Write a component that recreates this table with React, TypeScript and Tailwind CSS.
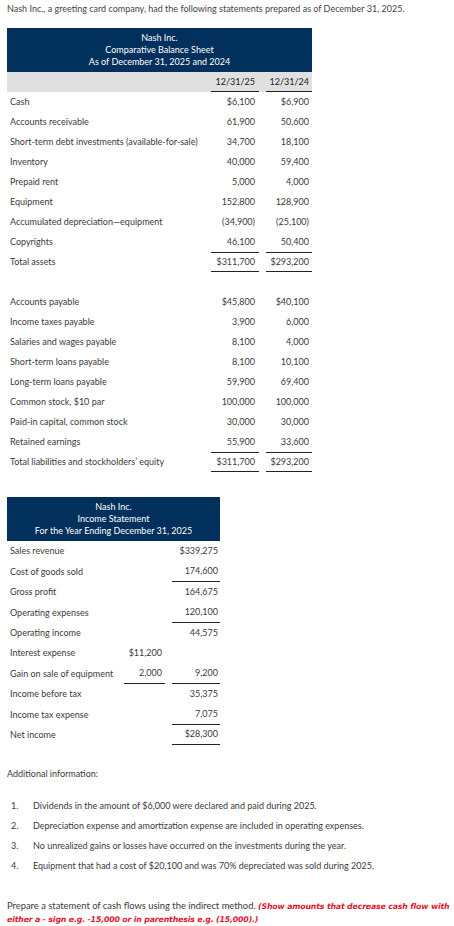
import React from "react";

type BsRow = { label: string; a: string; b: string; total?: boolean };

const assets: BsRow[] = [
  { label: "Cash", a: "$6,100", b: "$6,900" },
  { label: "Accounts receivable", a: "61,900", b: "50,600" },
  { label: "Short-term debt investments (available-for-sale)", a: "34,700", b: "18,100" },
  { label: "Inventory", a: "40,000", b: "59,400" },
  { label: "Prepaid rent", a: "5,000", b: "4,000" },
  { label: "Equipment", a: "152,800", b: "128,900" },
  { label: "Accumulated depreciation\u2014equipment", a: "(34,900)", b: "(25,100)" },
  { label: "Copyrights", a: "46,100", b: "50,400" },
  { label: "Total assets", a: "$311,700", b: "$293,200", total: true },
];

const liabilities: BsRow[] = [
  { label: "Accounts payable", a: "$45,800", b: "$40,100" },
  { label: "Income taxes payable", a: "3,900", b: "6,000" },
  { label: "Salaries and wages payable", a: "8,100", b: "4,000" },
  { label: "Short-term loans payable", a: "8,100", b: "10,100" },
  { label: "Long-term loans payable", a: "59,900", b: "69,400" },
  { label: "Common stock, $10 par", a: "100,000", b: "100,000" },
  { label: "Paid-in capital, common stock", a: "30,000", b: "30,000" },
  { label: "Retained earnings", a: "55,900", b: "33,600" },
  { label: "Total liabilities and stockholders\u2019 equity", a: "$311,700", b: "$293,200", total: true },
];

type IsRow = { label: string; mid?: string; right?: string; midLine?: boolean; rightLine?: boolean };

const income: IsRow[] = [
  { label: "Sales revenue", right: "$339,275" },
  { label: "Cost of goods sold", right: "174,600", rightLine: true },
  { label: "Gross profit", right: "164,675" },
  { label: "Operating expenses", right: "120,100", rightLine: true },
  { label: "Operating income", right: "44,575" },
  { label: "Interest expense", mid: "$11,200" },
  { label: "Gain on sale of equipment", mid: "2,000", right: "9,200", midLine: true, rightLine: true },
  { label: "Income before tax", right: "35,375" },
  { label: "Income tax expense", right: "7,075", rightLine: true },
  { label: "Net income", right: "$28,300", rightLine: true },
];

const notes = [
  "Dividends in the amount of $6,000 were declared and paid during 2025.",
  "Depreciation expense and amortization expense are included in operating expenses.",
  "No unrealized gains or losses have occurred on the investments during the year.",
  "Equipment that had a cost of $20,100 and was 70% depreciated was sold during 2025.",
];

function BsLine({ row }: { row: BsRow }) {
  return (
    <div className="flex h-5 items-center">
      <div className="flex-1 pl-[3px]">{row.label}</div>
      <div className={`flex h-full w-[48px] items-center justify-end pr-[4px] ${row.total ? "border-y border-[#222]" : ""}`}>
        {row.a}
      </div>
      <div className={`ml-[7px] flex h-full w-[46px] items-center justify-end pr-[3px] ${row.total ? "border-y border-[#222]" : ""}`}>
        {row.b}
      </div>
    </div>
  );
}

function Header({ lines }: { lines: string[] }) {
  return (
    <div className="flex h-[44px] flex-col items-center justify-center bg-[#00305b] text-[9px] leading-[12px] text-white">
      {lines.map((l) => (
        <div key={l}>{l}</div>
      ))}
    </div>
  );
}

export default function App() {
  return (
    <div className="min-h-[926px] w-[454px] bg-white font-[Lato,'Liberation_Sans',sans-serif] text-[9px] text-[#3a3a3a]">
      <p className="px-[7px] pt-[3px] leading-[12px] text-[#444]">
        Nash Inc., a greeting card company, had the following statements prepared as of December 31, 2025.
      </p>

      {/* Balance sheet */}
      <div className="ml-[7px] mt-[13px] w-[305px]">
        <Header lines={["Nash Inc.", "Comparative Balance Sheet", "As of December 31, 2025 and 2024"]} />
        <div className="flex h-5 bg-[#e0e0e0] text-[#222]">
          <div className="flex-1" />
          <div className="flex h-full w-[48px] items-center justify-end border-b border-[#222] pr-[4px]">12/31/25</div>
          <div className="ml-[7px] flex h-full w-[46px] items-center justify-end border-b border-[#222] pr-[3px]">12/31/24</div>
        </div>
        {assets.map((r) => (
          <BsLine key={r.label} row={r} />
        ))}
        <div className="h-5" />
        {liabilities.map((r) => (
          <BsLine key={r.label} row={r} />
        ))}
      </div>

      {/* Income statement */}
      <div className="ml-[7px] mt-[25px] w-[213px]">
        <Header lines={["Nash Inc.", "Income Statement", "For the Year Ending December 31, 2025"]} />
        {income.map((r) => (
          <div key={r.label} className="flex h-[20.4px] items-center">
            <div className="flex-1 pl-[3px]">{r.label}</div>
            <div className={`flex h-full w-[41px] items-center justify-end pr-[3px] ${r.midLine ? "border-b border-[#222]" : ""}`}>
              {r.mid}
            </div>
            <div className={`ml-[7px] flex h-full w-[48px] items-center justify-end pr-[2px] ${r.rightLine ? "border-b border-[#222]" : ""}`}>
              {r.right}
            </div>
          </div>
        ))}
      </div>

      {/* Additional information */}
      <p className="mt-[23px] px-[7px] leading-[12px]">Additional information:</p>
      <ol className="mt-[16px]">
        {notes.map((n, i) => (
          <li key={i} className="flex h-5 items-center">
            <span className="w-[33px] pl-[11px]">{i + 1}.</span>
            <span>{n}</span>
          </li>
        ))}
      </ol>

      <p className="mt-[24px] pl-[7px] text-[9.4px] leading-[12px]">
        Prepare a statement of cash flows using the indirect method.{" "}
        <span className="font-['DejaVu_Sans',sans-serif] text-[7.8px] leading-[12px] tracking-[-0.15px] font-bold italic text-[#e0152f]">
          (Show amounts that decrease cash flow with either a - sign e.g. -15,000 or in parenthesis e.g. (15,000).)
        </span>
      </p>
    </div>
  );
}
